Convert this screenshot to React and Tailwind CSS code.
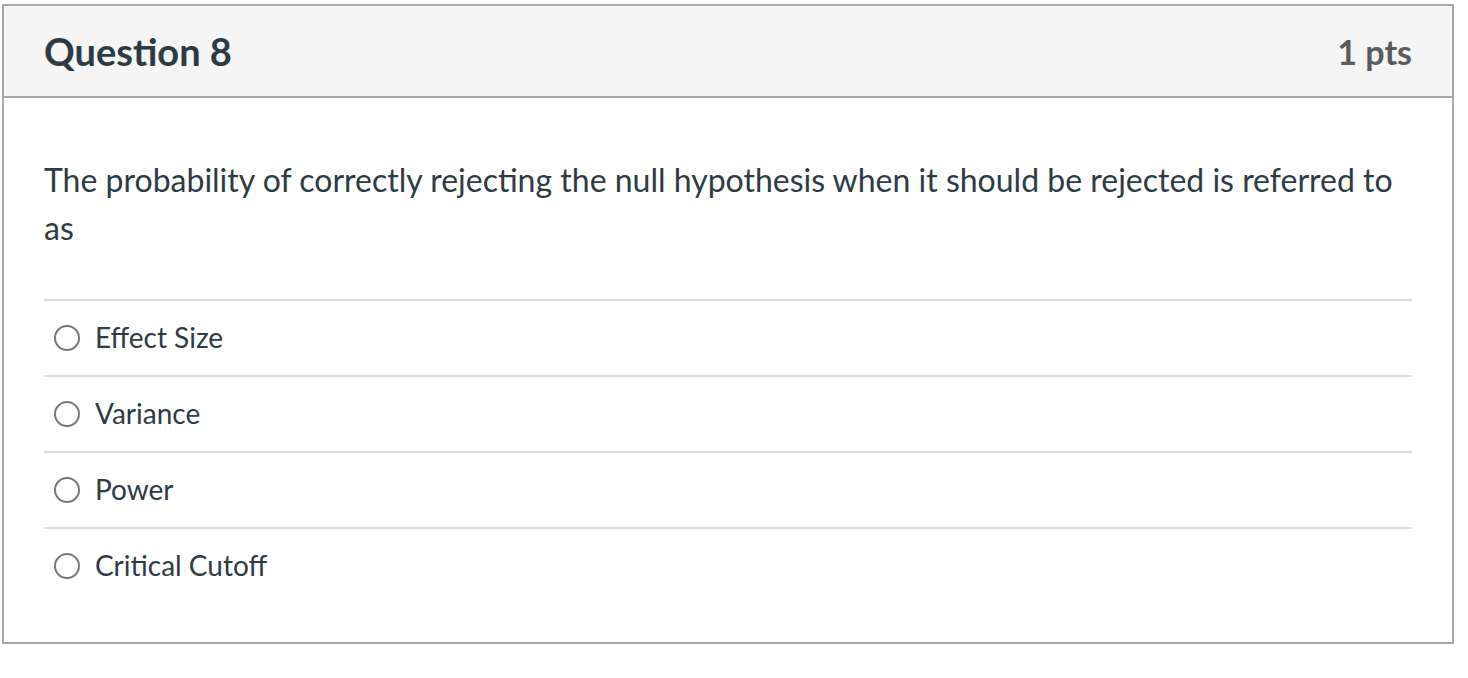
import React from 'react';

const answers = ['Effect Size', 'Variance', 'Power', 'Critical Cutoff'];

export default function App() {
  return (
    <div className="w-[1468px] h-[678px] bg-white pt-[4px] pl-[2px]" style={{ fontFamily: 'Lato, "Open Sans", sans-serif' }}>
      <div className="w-[1452px] h-[640px] border-2 border-[#a8a8a8]">
        <div className="h-[92px] bg-[#f5f5f5] border-b-2 border-[#a8a8a8] flex items-center justify-between pl-[40px] pr-[40px]">
          <h2 className="text-[38px] font-bold text-[#2d3b45]">Question 8</h2>
          <div className="text-[34px] font-bold text-[#5b5b5b]">1 pts</div>
        </div>
        <div className="px-[40px] pt-[58px]">
          <p className="text-[32px] leading-[48px] text-[#2d3b45]">
            The probability of correctly rejecting the null hypothesis when it should be rejected is referred to as
          </p>
          <div className="mt-[47px]">
            {answers.map((a) => (
              <div key={a} className="h-[76px] border-t-2 border-[#dcdcdc] flex items-center pl-[10px]">
                <span className="w-[26px] h-[26px] rounded-full border-2 border-[#777] mr-[15px]" />
                <span className="text-[28px] leading-[32px] text-[#2d3b45] -mt-[2px]">{a}</span>
              </div>
            ))}
          </div>
        </div>
      </div>
    </div>
  );
}
